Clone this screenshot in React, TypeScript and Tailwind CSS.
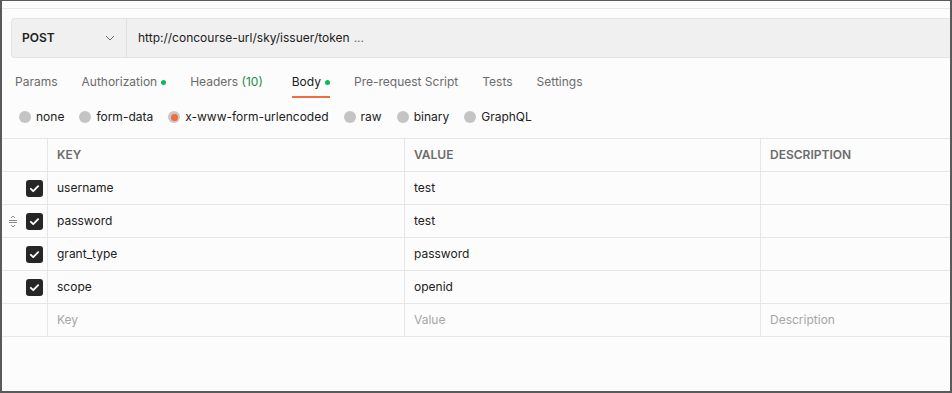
import React from "react";

const rows = [
  { k: "username", v: "test", drag: false },
  { k: "password", v: "test", drag: true },
  { k: "grant_type", v: "password", drag: false },
  { k: "scope", v: "openid", drag: false },
];

function Check() {
  return (
    <div className="w-[17px] h-[17px] rounded-[3px] bg-[#262626] flex items-center justify-center">
      <svg width="11" height="11" viewBox="0 0 12 12" fill="none">
        <path d="M2 6.3l2.6 2.6L10 3.4" stroke="#fff" strokeWidth="2" strokeLinecap="round" strokeLinejoin="round" />
      </svg>
    </div>
  );
}

function Drag() {
  return (
    <svg width="10" height="12" viewBox="0 0 10 12" fill="none" stroke="#8a8a8a" strokeWidth="1">
      <path d="M1 5.5h8M1 7.5h8" />
      <path d="M3 3l2-2 2 2M3 10l2 2 2-2" />
    </svg>
  );
}

function Radio({ label, on }: { label: string; on?: boolean }) {
  return (
    <div className="flex items-center gap-[5px]">
      {on ? (
        <div className="w-[12px] h-[12px] rounded-full bg-[#c8c8c8] flex items-center justify-center">
          <div className="w-[7px] h-[7px] rounded-full bg-[#f26b3a]" />
        </div>
      ) : (
        <div className="w-[12px] h-[12px] rounded-full bg-[#c4c4c4]" />
      )}
      <span className="text-[#212121]">{label}</span>
    </div>
  );
}

export default function App() {
  const font = { fontFamily: "Inter, 'Noto Sans', sans-serif" };
  return (
    <div
      className="w-[952px] h-[393px] bg-[#fcfcfc] border-l-2 border-r-2 border-b-2 border-t border-[#5a5a5a] overflow-hidden text-[12px] leading-[16px] text-[#212121]"
      style={font}
    >
      <div className="h-[8px] border-b border-[#e6e6e6]" />
      <div className="pl-[9px] pt-[9px]">
        <div className="flex h-[40px] bg-[#f0f0f0] border border-[#e3e3e3] border-r-0 rounded-l-[4px]">
          <div className="w-[115px] flex items-center justify-between pl-[10px] pr-[11px] border-r border-[#e0e0e0]">
            <span className="font-semibold text-[12px] text-[#212121]">POST</span>
            <svg width="10" height="6" viewBox="0 0 10 6" fill="none">
              <path d="M1 1l4 4 4-4" stroke="#6b6b6b" strokeWidth="1" />
            </svg>
          </div>
          <div className="flex items-center pl-[11px] text-[#212121]">
            http://concourse-url/sky/issuer/token <span className="ml-[4px] text-[#6b6b6b]">...</span>
          </div>
        </div>
      </div>
      <div className="flex pl-[13px] gap-[24px] h-[40px] items-start pt-[16px] text-[#6b6b6b]">
        <span>Params</span>
        <span className="flex items-center gap-[4px]">
          Authorization<span className="w-[5px] h-[5px] rounded-full bg-[#0cbb52]" />
        </span>
        <span>
          Headers <span className="text-[#1d8a4a]">(10)</span>
        </span>
        <span className="relative flex items-center gap-[4px] text-[#212121] ml-[5px]">
          Body<span className="w-[5px] h-[5px] rounded-full bg-[#0cbb52]" />
          <span className="absolute left-0 right-0 top-[22px] h-[2px] bg-[#f26b3a]" />
        </span>
        <span>Pre-request Script</span>
        <span>Tests</span>
        <span>Settings</span>
      </div>
      <div className="flex items-center gap-[15px] pl-[17px] h-[38px]">
        <Radio label="none" />
        <Radio label="form-data" />
        <Radio label="x-www-form-urlencoded" on />
        <Radio label="raw" />
        <Radio label="binary" />
        <Radio label="GraphQL" />
      </div>
      <div className="border-t border-[#e6e6e6] mt-[2px]">
        <div className="grid grid-cols-[46px_357px_356px_1fr] h-[33px] border-b border-[#e6e6e6] text-[12px] font-semibold text-[#6b6b6b]">
          <div className="border-r border-[#e6e6e6]" />
          <div className="border-r border-[#e6e6e6] flex items-center pl-[9px]">KEY</div>
          <div className="border-r border-[#e6e6e6] flex items-center pl-[9px]">VALUE</div>
          <div className="flex items-center pl-[9px]">DESCRIPTION</div>
        </div>
        {rows.map((r) => (
          <div key={r.k} className="grid grid-cols-[46px_357px_356px_1fr] h-[33px] border-b border-[#e6e6e6]">
            <div className="border-r border-[#e6e6e6] flex items-center justify-end pr-[4px] gap-[8px]">
              {r.drag && <Drag />}
              <Check />
            </div>
            <div className="border-r border-[#e6e6e6] flex items-center pl-[9px]">{r.k}</div>
            <div className="border-r border-[#e6e6e6] flex items-center pl-[9px]">{r.v}</div>
            <div />
          </div>
        ))}
        <div className="grid grid-cols-[46px_357px_356px_1fr] h-[33px] border-b border-[#e6e6e6] text-[#a6a6a6]">
          <div className="border-r border-[#e6e6e6]" />
          <div className="border-r border-[#e6e6e6] flex items-center pl-[9px]">Key</div>
          <div className="border-r border-[#e6e6e6] flex items-center pl-[9px]">Value</div>
          <div className="flex items-center pl-[9px]">Description</div>
        </div>
      </div>
    </div>
  );
}
